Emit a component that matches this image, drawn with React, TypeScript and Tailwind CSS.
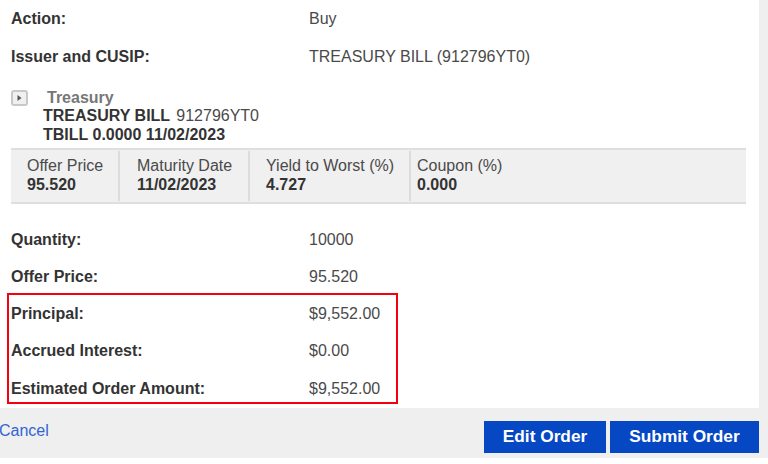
const Row = ({ label, value }: { label: string; value: string }) => (
  <div className="flex h-[37.4px] items-center">
    <div className="w-[298px] font-bold text-[#333]">{label}</div>
    <div className="text-[#4a4a4a]">{value}</div>
  </div>
);

const Stat = ({ label, value, className }: { label: string; value: string; className: string }) => (
  <div className={`h-[50px] pt-[6px] leading-[18.7px] ${className}`}>
    <div className="text-[#4a4a4a]">{label}</div>
    <div className="font-bold text-[#333]">{value}</div>
  </div>
);

export default function App() {
  return (
    <div className="h-[464px] w-[768px] overflow-hidden bg-white font-['Liberation_Sans',Arial,sans-serif] text-[16px]">
      <div className="flex h-[458px] flex-col bg-[#efefef]">
        <div className="mr-[9px] h-[408px] bg-white pl-[11px]">
          <div className="pt-[0.5px]">
            <Row label="Action:" value="Buy" />
            <Row label="Issuer and CUSIP:" value="TREASURY BILL (912796YT0)" />
          </div>
          <div className="relative mt-[13.5px] pl-[32px] leading-[18.7px]">
            <div className="absolute left-0 top-[1px] flex h-[16px] w-[17px] items-center justify-center rounded-[3px] border-2 border-[#c8c8c8] bg-[#f0f0f0]">
              <svg width="5" height="6" viewBox="0 0 5 6"><path d="M0.5 0 L4.5 3 L0.5 6 Z" fill="#555" /></svg>
            </div>
            <div className="pl-[4px] font-bold text-[#777]">Treasury</div>
            <div className="font-bold text-[#333]">
              TREASURY BILL <span className="ml-[2px] font-normal text-[#4a4a4a]">912796YT0</span>
            </div>
            <div className="font-bold text-[#333]">TBILL 0.0000 11/02/2023</div>
          </div>
          <div className="mt-[3px] flex h-[56px] w-[735px] items-center border-y-2 border-[#dedede] bg-[#f0f0f0]">
            <Stat label="Offer Price" value="95.520" className="w-[109px] border-r-2 border-[#dcdcdc] pl-[16px]" />
            <Stat label="Maturity Date" value="11/02/2023" className="w-[130px] border-r-2 border-[#dcdcdc] pl-[17px]" />
            <Stat label="Yield to Worst (%)" value="4.727" className="w-[161px] border-r-2 border-[#dcdcdc] pl-[16px]" />
            <Stat label="Coupon (%)" value="0.000" className="flex-1 pl-[6px]" />
          </div>
          <div className="mt-[17.5px]">
            <Row label="Quantity:" value="10000" />
            <Row label="Offer Price:" value="95.520" />
          </div>
          <div className="-mt-[3.5px] -ml-[4px] h-[111px] w-[391px] border-[2.5px] border-[#f5000f] pl-[2px] pt-[0.5px]">
            <Row label="Principal:" value="$9,552.00" />
            <Row label="Accrued Interest:" value="$0.00" />
            <Row label="Estimated Order Amount:" value="$9,552.00" />
          </div>
        </div>
        <div className="flex flex-1 justify-between">
          <a className="mt-[11px] -ml-[1px] text-[#2f64d4]">Cancel</a>
          <div className="mr-[9px] mt-[13px] flex gap-[4px]">
            <button className="h-[32px] w-[122px] bg-[#0648c4] text-[17.3px] font-bold text-white">Edit Order</button>
            <button className="h-[32px] w-[149px] bg-[#0648c4] text-[17.3px] font-bold text-white">Submit Order</button>
          </div>
        </div>
      </div>
    </div>
  );
}
